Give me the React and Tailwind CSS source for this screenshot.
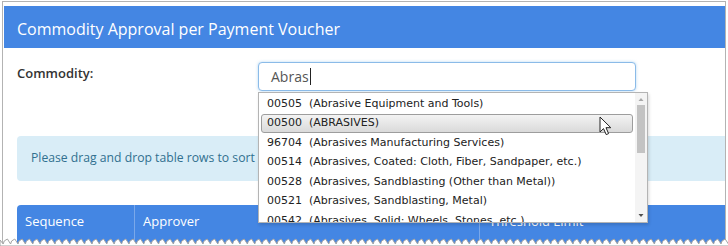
import React from 'react';

const options = [
  { code: '00505', name: '(Abrasive Equipment and Tools)' },
  { code: '00500', name: '(ABRASIVES)', active: true },
  { code: '96704', name: '(Abrasives Manufacturing Services)' },
  { code: '00514', name: '(Abrasives, Coated: Cloth, Fiber, Sandpaper, etc.)' },
  { code: '00528', name: '(Abrasives, Sandblasting (Other than Metal))' },
  { code: '00521', name: '(Abrasives, Sandblasting, Metal)' },
  { code: '00542', name: '(Abrasives, Solid: Wheels, Stones, etc.)' },
];

// torn paper edge along the bottom of the screenshot
const tornEdge = () => {
  let d = 'M0 246 L0 240';
  for (let x = 0; x < 740; x += 7.4) {
    d += ` L${(x + 3.2).toFixed(1)} 244 L${(x + 4.2).toFixed(1)} 241 L${(x + 7.4).toFixed(1)} 239`;
  }
  d += ' L740 246 Z';
  return d;
};

const Cursor = () => (
  <svg width="14" height="20" viewBox="0 0 14 20" className="absolute right-[19px] top-[1px]">
    <path
      d="M1 1 L1 16 L4.5 12.6 L7.2 18.6 L9.6 17.6 L7 11.7 L11.8 11.7 Z"
      fill="#fff"
      stroke="#222"
      strokeWidth="1"
      strokeLinejoin="round"
    />
  </svg>
);

const Dropdown = () => (
  <div className="absolute left-0 top-[30px] z-10 flex h-[131px] w-[390px] border border-[#b4b4b4] bg-white shadow-[1px_2px_3px_rgba(0,0,0,0.15)]">
    <ul className="flex-1 overflow-hidden pl-[2px] pr-[2px] pt-[1px] font-['DejaVu_Sans',Verdana,sans-serif] text-[11px] text-[#222]">
      {options.map((o) =>
        o.active ? (
          <li
            key={o.code}
            className="relative flex h-[19.5px] items-center whitespace-pre rounded-[3px] border border-[#9d9d9d] bg-gradient-to-b from-[#f3f3f3] to-[#dadada] pl-[5px]"
          >
            {o.code}  {o.name}
            <Cursor />
          </li>
        ) : (
          <li key={o.code} className="flex h-[19.5px] items-center whitespace-pre pl-[6px]">
            {o.code}  {o.name}
          </li>
        )
      )}
    </ul>
    <div className="flex w-[12px] flex-col items-center bg-[#f4f4f4]">
      <svg width="8" height="12" viewBox="0 0 8 12">
        <path d="M1.5 8 L4 5 L6.5 8 Z" fill="#a8a8a8" />
      </svg>
      <div className="h-[48px] w-[8px] bg-[#c3c3c3]" />
      <div className="flex-1" />
      <svg width="8" height="12" viewBox="0 0 8 12">
        <path d="M1.5 4 L6.5 4 L4 7 Z" fill="#505050" />
      </svg>
    </div>
  </div>
);

export default function App() {
  return (
    <div className="relative h-[246px] w-[728px] overflow-hidden bg-white font-['Open_Sans',sans-serif]">
      <div className="ml-[2px] mt-[1px] h-[260px] w-[724px] border-x border-t border-[#b3b3b3] pt-[4px]">
        {/* PANEL HEADER */}
        <div className="ml-[1px] flex h-[42px] items-center bg-[#4486e3] pl-[13px] pt-[3px] text-[16px] text-white">
          Commodity Approval per Payment Voucher
        </div>

        <div className="pl-[14px]">
          {/* COMMODITY FIELD */}
          <div className="mt-[14px] flex">
            <label className="w-[241px] pt-[2px] text-[13px] font-semibold text-[#333]">Commodity:</label>
            <div className="relative">
              <div className="flex h-[29px] w-[378px] items-center rounded-[4px] border border-[#8bbbe8] bg-white pl-[12px] text-[14px] text-[#555] shadow-[0_0_3px_rgba(102,175,233,0.5)]">
                Abras
                <span className="ml-[1px] h-[17px] w-px bg-[#222]" />
              </div>
              <Dropdown />
            </div>
          </div>

          {/* INFO ALERT */}
          <div className="mt-[45px] flex h-[45px] items-center rounded-l-[4px] bg-[#d9edf7] pl-[14px] text-[12.2px] text-[#31708f]">
            Please drag and drop table rows to sort
          </div>

          {/* TABLE HEADER */}
          <div className="mt-[24px] flex h-[40px] rounded-tl-[4px] bg-[#4486e3] text-[13px] text-white">
            <div className="w-[118px] border-r border-[#7aa8ea] pl-[8px] pt-[7px]">Sequence</div>
            <div className="w-[345px] border-r border-[#7aa8ea] pl-[8px] pt-[7px]">Approver</div>
            <div className="flex-1 pl-[9px] pt-[7px]">Threshold Limit</div>
          </div>
        </div>
      </div>

      <svg width="728" height="12" viewBox="0 234 728 12" className="absolute bottom-0 left-0">
        <path d={tornEdge()} fill="#fff" stroke="#a3a3a3" strokeWidth="1" />
      </svg>
    </div>
  );
}
